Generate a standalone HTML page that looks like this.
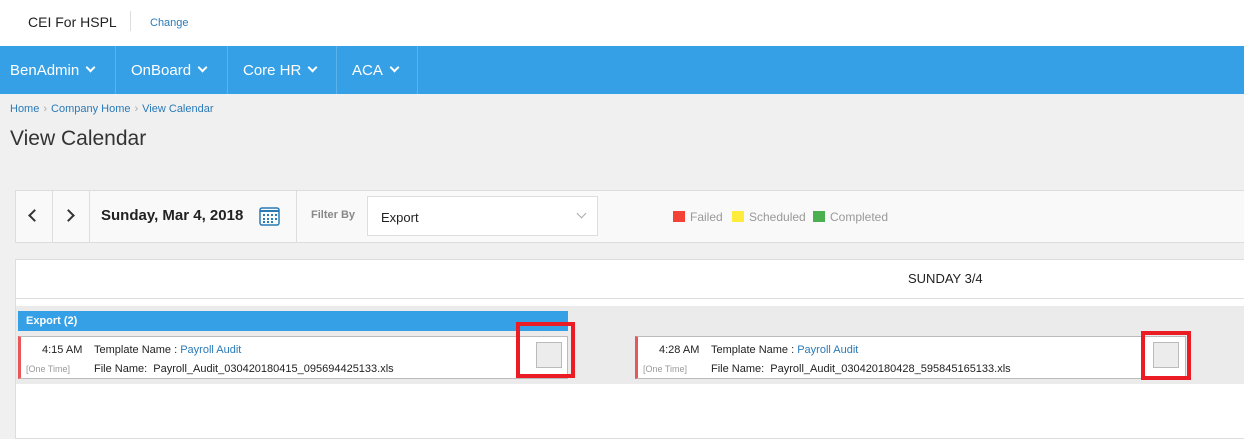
<!DOCTYPE html>
<html><head><meta charset="utf-8"><style>
*{box-sizing:border-box;margin:0;padding:0}
body{width:1244px;height:427px;overflow:hidden;background:#f0f0f0;font-family:"Liberation Sans",sans-serif;position:relative}
.a{position:absolute}
.hdr{left:0;top:0;width:1244px;height:46px;background:#fff}
.nav{left:0;top:46px;width:1244px;height:48px;background:#35a0e6}
.nav div{position:absolute;top:0;height:48px;line-height:50px;color:#fff;font-size:15px;border-right:1px solid #5cb3ec}
.chev{display:inline-block;width:7px;height:7px;border-right:2px solid #fff;border-bottom:2px solid #fff;transform:rotate(45deg);margin-left:8px;position:relative;top:-4px}
.bc{left:10px;top:103px;font-size:11px;color:#2a7ab8}
.bc span{color:#aaa;margin:0 4px}
h1{position:absolute;left:10px;top:127px;font-size:21px;font-weight:normal;color:#333}
.tb{left:15px;top:190px;width:1240px;height:53px;background:#f9f9f9;border:1px solid #ddd}
.vd{top:190px;width:1px;height:53px;background:#ddd}
.cal{left:15px;top:259px;width:1240px;height:180px;background:#fff;border:1px solid #ddd}
.card{background:#fff;border:1px solid #bbb;border-left:3px solid #e8575a;height:43px;font-size:11px;color:#222}
.rb{border:4px solid #ec1c24}
.cb{width:26px;height:26px;background:#ececec;border:1px solid #bbb}
</style></head><body>
<div class="a hdr"></div>
<div class="a" style="left:28px;top:14px;font-size:14px;color:#222">CEI For HSPL</div>
<div class="a" style="left:130px;top:11px;width:1px;height:20px;background:#ddd"></div>
<div class="a" style="left:150px;top:17px;font-size:11px;color:#2a7ab8">Change</div>
<div class="a nav">
<div style="left:0;width:116px;padding-left:10px">BenAdmin<i class="chev"></i></div>
<div style="left:116px;width:112px;padding-left:15px">OnBoard<i class="chev"></i></div>
<div style="left:228px;width:109px;padding-left:15px">Core HR<i class="chev"></i></div>
<div style="left:337px;width:81px;padding-left:15px">ACA<i class="chev"></i></div>
</div>
<div class="a bc">Home<span>›</span>Company Home<span>›</span>View Calendar</div>
<h1>View Calendar</h1>
<div class="a tb"></div>
<div class="a vd" style="left:52px"></div><div class="a vd" style="left:89px"></div><div class="a vd" style="left:296px"></div>
<div class="a" style="left:30px;top:211px;width:9px;height:9px;border-left:2px solid #333;border-bottom:2px solid #333;transform:rotate(45deg)"></div>
<div class="a" style="left:64px;top:211px;width:9px;height:9px;border-right:2px solid #333;border-top:2px solid #333;transform:rotate(45deg)"></div>
<div class="a" style="left:101px;top:207px;font-size:15px;font-weight:bold;color:#222">Sunday, Mar 4, 2018</div>
<svg class="a" style="left:259px;top:205px" width="21" height="21" viewBox="0 0 21 21"><rect x="1" y="3" width="19" height="17" rx="2" fill="none" stroke="#2a7ab8" stroke-width="1.5"/><line x1="1" y1="6" x2="20" y2="6" stroke="#2a7ab8" stroke-width="2"/><g fill="#2a7ab8"><rect x="4" y="9" width="2" height="2"/><rect x="8" y="9" width="2" height="2"/><rect x="12" y="9" width="2" height="2"/><rect x="16" y="9" width="2" height="2"/><rect x="4" y="13" width="2" height="2"/><rect x="8" y="13" width="2" height="2"/><rect x="12" y="13" width="2" height="2"/><rect x="16" y="13" width="2" height="2"/><rect x="4" y="16" width="2" height="2"/><rect x="8" y="16" width="2" height="2"/><rect x="12" y="16" width="2" height="2"/></g></svg>
<div class="a" style="left:311px;top:209px;font-size:11px;font-weight:bold;color:#888">Filter By</div>
<div class="a" style="left:367px;top:196px;width:231px;height:40px;background:#fff;border:1px solid #ddd"></div>
<div class="a" style="left:381px;top:210px;font-size:13px;color:#222">Export</div>
<div class="a" style="left:578px;top:210px;width:7px;height:7px;border-right:1px solid #aaa;border-bottom:1px solid #aaa;transform:rotate(45deg)"></div>
<div class="a" style="left:673px;top:211px;width:12px;height:11px;background:#f44336"></div>
<div class="a" style="left:690px;top:210px;font-size:12px;color:#999">Failed</div>
<div class="a" style="left:732px;top:211px;width:12px;height:11px;background:#ffeb3b"></div>
<div class="a" style="left:749px;top:210px;font-size:12px;color:#999">Scheduled</div>
<div class="a" style="left:813px;top:211px;width:12px;height:11px;background:#4caf50"></div>
<div class="a" style="left:830px;top:210px;font-size:12px;color:#999">Completed</div>
<div class="a cal"></div>
<div class="a" style="left:16px;top:298px;width:1240px;height:1px;background:#ddd"></div>
<div class="a" style="left:908px;top:271px;font-size:13px;color:#222">SUNDAY 3/4</div>
<div class="a" style="left:16px;top:306px;width:1240px;height:78px;background:#ebebeb"></div>
<div class="a" style="left:18px;top:311px;width:550px;height:20px;background:#35a0e6;color:#fff;font-size:11px;font-weight:bold;line-height:20px;padding-left:8px">Export (2)</div>
<div class="a card" style="left:18px;top:336px;width:550px"></div>
<div class="a" style="left:42px;top:344px;font-size:11px;color:#222">4:15 AM</div>
<div class="a" style="left:26px;top:364px;font-size:9px;color:#999">[One Time]</div>
<div class="a" style="left:94px;top:344px;font-size:11px;color:#222">Template Name : <span style="color:#2a7ab8">Payroll Audit</span></div>
<div class="a" style="left:94px;top:363px;font-size:11px;color:#222">File Name:&nbsp; Payroll_Audit_030420180415_095694425133.xls</div>
<div class="a rb" style="left:516px;top:322px;width:59px;height:56px"></div>
<div class="a cb" style="left:536px;top:342px"></div>
<div class="a card" style="left:635px;top:336px;width:551px"></div>
<div class="a" style="left:659px;top:344px;font-size:11px;color:#222">4:28 AM</div>
<div class="a" style="left:643px;top:364px;font-size:9px;color:#999">[One Time]</div>
<div class="a" style="left:711px;top:344px;font-size:11px;color:#222">Template Name : <span style="color:#2a7ab8">Payroll Audit</span></div>
<div class="a" style="left:711px;top:363px;font-size:11px;color:#222">File Name:&nbsp; Payroll_Audit_030420180428_595845165133.xls</div>
<div class="a rb" style="left:1141px;top:331px;width:50px;height:49px"></div>
<div class="a cb" style="left:1153px;top:342px"></div>
</body></html>
